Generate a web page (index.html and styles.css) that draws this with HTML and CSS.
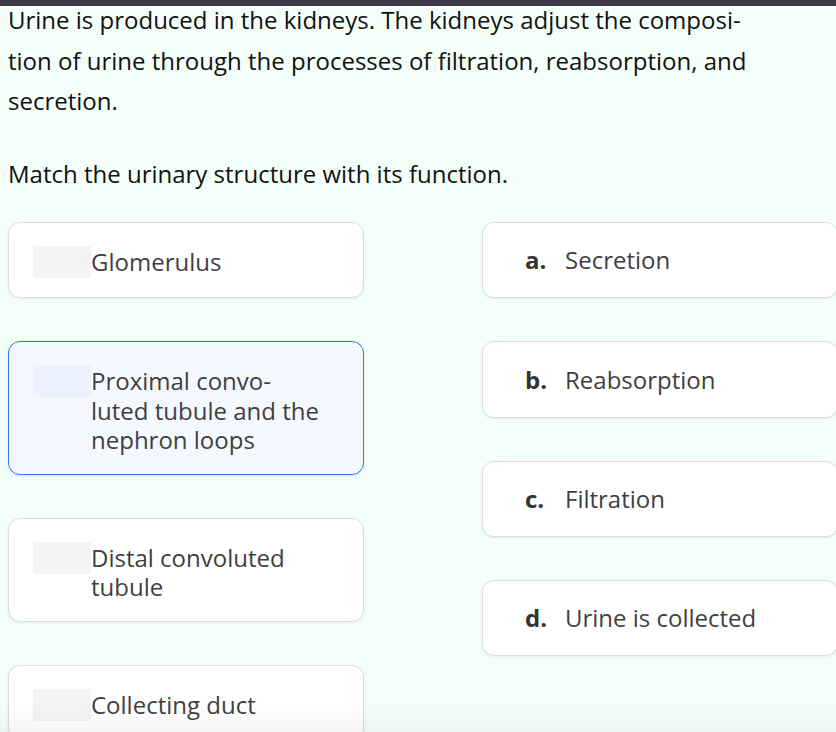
FILE: index.html
```html
<!DOCTYPE html>
<html lang="en">
<head>
<meta charset="utf-8">
<title>Match the urinary structure</title>
<link rel="stylesheet" href="styles.css">
</head>
<body>
<div class="topbar"></div>
<main class="content">
  <p class="prompt">Urine is produced in the kidneys. The kidneys adjust the composi&shy;tion of urine through the processes of filtration, reabsorption, and secretion.</p>
  <p class="prompt instruction">Match the urinary structure with its function.</p>
  <div class="match">
    <div class="column">
      <div class="card item">
        <span class="slot"></span>
        <span class="item-text">Glomerulus</span>
      </div>
      <div class="card item selected">
        <span class="slot"></span>
        <span class="item-text">Proximal convo&shy;<span class="keep">luted tubule and the</span> nephron loops</span>
      </div>
      <div class="card item">
        <span class="slot"></span>
        <span class="item-text">Distal convoluted tubule</span>
      </div>
      <div class="card item">
        <span class="slot"></span>
        <span class="item-text">Collecting duct</span>
      </div>
    </div>
    <div class="column">
      <div class="card option"><span class="label">a.</span><span class="option-text">Secretion</span></div>
      <div class="card option"><span class="label">b.</span><span class="option-text">Reabsorption</span></div>
      <div class="card option"><span class="label">c.</span><span class="option-text">Filtration</span></div>
      <div class="card option"><span class="label">d.</span><span class="option-text">Urine is collected</span></div>
    </div>
  </div>
</main>
<div class="fade"></div>
</body>
</html>
```
FILE: styles.css
```css
html, body {
  margin: 0;
  padding: 0;
}
body {
  background: #f5fffa;
  font-family: "Open Sans", "Noto Sans", sans-serif;
  color: #111;
  overflow: hidden;
}
.topbar {
  position: fixed;
  top: 0;
  left: 0;
  right: 0;
  height: 6px;
  background: #3e3747;
  z-index: 5;
}
.content {
  padding: 0 8px;
  width: 900px;
}
.prompt {
  margin: 0;
  font-size: 24px;
  line-height: 40.5px;
  width: 765px;
  color: #111;
  hyphens: manual;
}
.instruction {
  margin-top: 32px;
}
.match {
  display: flex;
  gap: 118px;
  margin-top: 28px;
  align-items: flex-start;
}
.column {
  display: flex;
  flex-direction: column;
  gap: 43px;
  width: 356px;
  flex-shrink: 0;
}
.card {
  box-sizing: border-box;
  background: #fff;
  border: 1px solid #dcdcdc;
  border-radius: 12px;
  box-shadow: 0 1px 3px rgba(0, 0, 0, 0.07);
  font-size: 24px;
  line-height: 29.5px;
  color: #3f3f3f;
}
.item {
  display: flex;
  align-items: flex-start;
  padding: 23px 24px 19px 24px;
}
.slot {
  width: 58px;
  height: 32px;
  flex-shrink: 0;
  background: #f4f4f4;
}
.item-text {
  display: block;
  width: 226px;
  padding-top: 1px;
  hyphens: manual;
}
.keep {
  white-space: nowrap;
}
.selected {
  background: #f5f8ff;
  border-color: #2b7de9;
}
.selected .slot {
  background: #ebf1fd;
}
.option {
  display: flex;
  align-items: center;
  padding: 22.4px 20px 22.4px 42px;
}
.label {
  width: 40px;
  flex-shrink: 0;
  font-weight: 700;
  color: #333;
}
.option-text {
  white-space: nowrap;
}
.fade {
  position: fixed;
  left: 0;
  right: 0;
  bottom: 0;
  height: 30px;
  background: linear-gradient(rgba(0, 0, 0, 0), rgba(0, 0, 0, 0.035));
  pointer-events: none;
}
```
